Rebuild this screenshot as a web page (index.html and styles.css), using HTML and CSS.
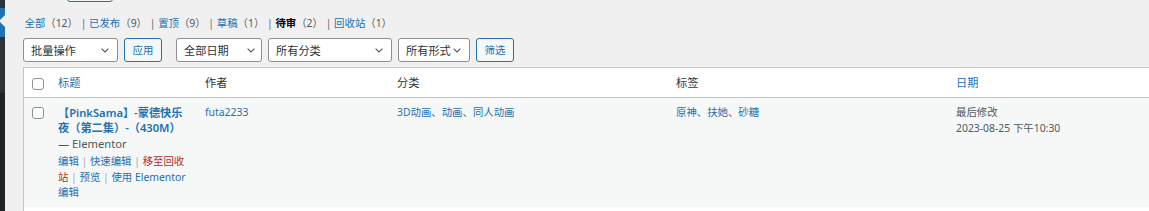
FILE: index.html
```html
<!DOCTYPE html>
<html lang="zh-CN">
<head>
<meta charset="utf-8">
<title>文章 ‹ 管理</title>
<link rel="stylesheet" href="styles.css">
</head>
<body>
<div class="layout">
  <nav class="menu" aria-label="管理菜单">
    <div class="menu-top"></div>
    <div class="menu-current"><span class="menu-arrow"></span></div>
    <div class="menu-sub"></div>
    <div class="menu-rest"></div>
  </nav>
  <main class="content">
    <div class="page-head"><span class="add-new"></span></div>
    <ul class="subsubsub">
      <li><a href="#">全部<span class="count">（12）</span></a> |</li>
      <li><a href="#">已发布<span class="count">（9）</span></a> |</li>
      <li><a href="#">置顶<span class="count">（9）</span></a> |</li>
      <li><a href="#">草稿<span class="count">（1）</span></a> |</li>
      <li><a href="#" class="current">待审<span class="count">（2）</span></a> |</li>
      <li><a href="#">回收站<span class="count">（1）</span></a></li>
    </ul>
    <div class="tablenav">
      <div class="select select-bulk"><span>批量操作</span><svg class="chev" viewBox="0 0 8 5" aria-hidden="true"><path d="M0.6 0.6 L4 4 L7.4 0.6"/></svg></div>
      <button class="btn btn-apply" type="button">应用</button>
      <div class="select select-date"><span>全部日期</span><svg class="chev" viewBox="0 0 8 5" aria-hidden="true"><path d="M0.6 0.6 L4 4 L7.4 0.6"/></svg></div>
      <div class="select select-cat"><span>所有分类</span><svg class="chev" viewBox="0 0 8 5" aria-hidden="true"><path d="M0.6 0.6 L4 4 L7.4 0.6"/></svg></div>
      <div class="select select-format"><span>所有形式</span><svg class="chev" viewBox="0 0 8 5" aria-hidden="true"><path d="M0.6 0.6 L4 4 L7.4 0.6"/></svg></div>
      <button class="btn btn-filter" type="button">筛选</button>
    </div>
    <table class="posts">
      <colgroup>
        <col class="c-cb"><col class="c-title"><col class="c-author"><col class="c-cat"><col class="c-tags"><col class="c-date">
      </colgroup>
      <thead>
        <tr>
          <td class="check head-check"><input class="cb" type="checkbox" aria-label="全选"></td>
          <th><a href="#">标题</a></th>
          <th>作者</th>
          <th>分类</th>
          <th>标签</th>
          <th><a href="#">日期</a></th>
        </tr>
      </thead>
      <tbody>
        <tr class="alt">
          <td class="check"><input class="cb" type="checkbox" aria-label="选择文章"></td>
          <td class="col-title">
            <strong class="title"><a class="row-title" href="#">【PinkSama】-蒙德快乐<br>夜（第二集）-（430M）</a><br><span class="post-state">— Elementor</span></strong>
            <div class="row-actions"><span><a href="#">编辑</a> | </span><span><a href="#">快速编辑</a> | </span><span><a class="trash" href="#">移至回收<br>站</a> | </span><span><a href="#">预览</a> | </span><span><a href="#">使用 Elementor<br>编辑</a></span></div>
          </td>
          <td><a href="#">futa2233</a></td>
          <td><a href="#">3D动画</a>、<a href="#">动画</a>、<a href="#">同人动画</a></td>
          <td><a href="#">原神</a>、<a href="#">扶她</a>、<a href="#">砂糖</a></td>
          <td class="col-date">最后修改<br>2023-08-25 下午10:30</td>
        </tr>
        <tr class="plain">
          <td class="check"></td><td></td><td></td><td></td><td></td><td></td>
        </tr>
      </tbody>
    </table>
  </main>
</div>
</body>
</html>
```

FILE: styles.css
```css
html, body {
  margin: 0;
  padding: 0;
  height: 100%;
  overflow: hidden;
  background: #f0f0f1;
}

body {
  font-family: "Noto Sans", "Noto Sans CJK SC", sans-serif;
  font-size: 10.4px;
  color: #3c434a;
}

a {
  color: #2271b1;
  text-decoration: none;
}

.layout {
  display: flex;
  min-height: 100vh;
}

/* admin menu sliver */
.menu {
  width: 5px;
  flex: 0 0 5px;
  display: flex;
  flex-direction: column;
}

.menu-top {
  height: 8px;
  background: #2c3338;
}

.menu-current {
  height: 29px;
  background: #2271b1;
  position: relative;
}

.menu-arrow {
  position: absolute;
  right: 0;
  top: 7px;
  width: 0;
  height: 0;
  border-right: 6.5px solid #f0f0f1;
  border-top: 6.5px solid transparent;
  border-bottom: 6.5px solid transparent;
}

.menu-sub {
  height: 56px;
  background: #2c3338;
}

.menu-rest {
  flex: 1;
  background: #1d2327;
}

/* main content */
.content {
  flex: 1;
  min-width: 0;
  padding-left: 18px;
}

.page-head {
  height: 3px;
  display: flex;
  align-items: flex-end;
  overflow: hidden;
  padding-left: 43.5px;
}

.add-new {
  display: block;
  width: 44px;
  height: 12px;
  border: 1px solid #2271b1;
  border-radius: 3px;
  background: #f6f7f7;
  margin-bottom: 1px;
}

.subsubsub {
  list-style: none;
  margin: 13px 0 0;
  padding: 0 0 0 1.5px;
  line-height: 15px;
  color: #646970;
  white-space: nowrap;
}

.subsubsub li {
  display: inline-block;
}

.subsubsub .count {
  color: #50575e;
}

.subsubsub .current {
  color: #000;
  font-weight: 600;
}

.subsubsub .current .count {
  font-weight: 400;
}

.tablenav {
  display: flex;
  gap: 6px;
  margin-top: 7px;
  height: 24px;
}

.select {
  box-sizing: border-box;
  height: 24px;
  display: flex;
  align-items: center;
  padding: 0 8px 0 7px;
  border: 1px solid #8c8f94;
  border-radius: 3px;
  background: #fff;
  color: #2c3338;
  font-size: 11.2px;
}

.select span {
  flex: 1;
  white-space: nowrap;
}

.chev {
  width: 8px;
  height: 5px;
  flex: 0 0 8px;
  fill: none;
  stroke: #50575e;
  stroke-width: 1.1;
}

.select-bulk { width: 95px; }
.select-date { width: 86px; margin-left: 8px; padding-right: 6px; }
.select-cat { width: 124px; }
.select-format { width: 72px; }

.btn {
  box-sizing: border-box;
  height: 24px;
  width: 38px;
  padding: 0;
  border: 1px solid #2271b1;
  border-radius: 3px;
  background: #f6f7f7;
  color: #2271b1;
  font-family: inherit;
  font-size: 10.4px;
  line-height: 1;
}

/* posts table */
.posts {
  margin-top: 5px;
  width: 1150px;
  table-layout: fixed;
  border: 1px solid #c3c4c7;
  border-spacing: 0;
  background: #fff;
}

.c-cb { width: 26px; }
.c-title { width: 147px; }
.c-author { width: 192px; }
.c-cat { width: 279px; }
.c-tags { width: 280px; }

.posts th,
.posts td {
  padding: 0 8px;
  text-align: left;
  vertical-align: top;
}

.posts thead th,
.posts thead td {
  height: 29px;
  box-sizing: border-box;
  padding-top: 6.5px;
  padding-bottom: 6.5px;
  border-bottom: 1px solid #c3c4c7;
  font-size: 11.2px;
  font-weight: 400;
  line-height: 16px;
  color: #2c3338;
}

.posts tbody td {
  padding-top: 7px;
  padding-bottom: 6px;
  line-height: 15.6px;
  color: #50575e;
}

.posts .check {
  padding: 9.3px 0 0 8.3px;
}

.posts thead .head-check {
  padding: 9.5px 0 0 8.3px;
}

.cb {
  appearance: none;
  -webkit-appearance: none;
  display: block;
  box-sizing: border-box;
  width: 12px;
  height: 12px;
  margin: 0;
  border: 1px solid #8c8f94;
  border-radius: 3px;
  background: #fff;
}

.alt {
  background: #f6f7f7;
}

.plain td {
  height: 30px;
}

.title {
  display: block;
  font-size: 11.2px;
  line-height: 15.4px;
  font-weight: 600;
  white-space: nowrap;
}

.post-state {
  font-weight: 400;
  color: #50575e;
}

.row-actions {
  padding-top: 3px;
  line-height: 15.5px;
  color: #a7aaad;
  white-space: nowrap;
}

.row-actions .trash {
  color: #b32d2e;
}

.col-date {
  color: #3c434a;
}
```
